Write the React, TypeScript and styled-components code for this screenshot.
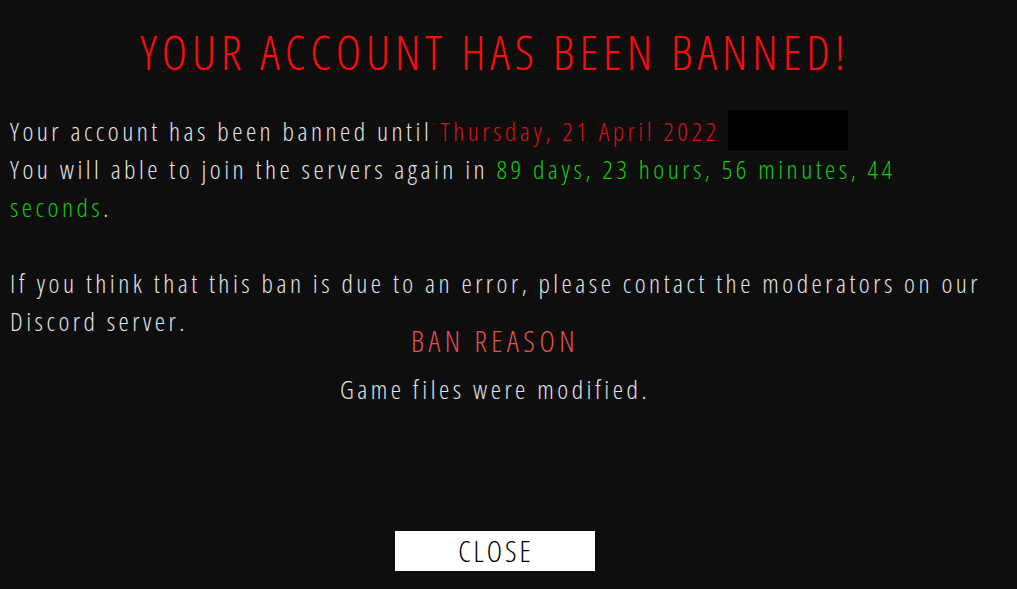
import styled, { createGlobalStyle } from "styled-components"

const GlobalStyle = createGlobalStyle`
  html, body {
    margin: 0;
    background: #0e0e0e;
  }
`

const Screen = styled.div`
  box-sizing: border-box;
  display: flex;
  flex-direction: column;
  align-items: center;
  min-height: 100vh;
  max-width: 980px;
  padding: 19px 0 18px 10px;
  font-family: "Open Sans", "Liberation Sans", sans-serif;
  font-stretch: 75%;
  font-weight: 300;
  color: #e4e4e4;
`

const Title = styled.h1`
  margin: 0;
  font-size: 48px;
  font-weight: 300;
  line-height: 65px;
  letter-spacing: 5px;
  color: #ff0a0a;
  text-align: center;
`

const Message = styled.p`
  align-self: stretch;
  margin: 26px -20px 0 0;
  font-size: 26px;
  line-height: 38px;
  letter-spacing: 3.48px;
`

const Highlight = styled.span<{ $tone: "red" | "green" }>`
  color: ${({ $tone }) => ($tone === "red" ? "#d81212" : "#12cc12")};
`

const Redacted = styled.span`
  display: inline-block;
  width: 120px;
  height: 40px;
  background: #000;
  vertical-align: bottom;
`

const ReasonBlock = styled.div`
  display: flex;
  flex-direction: column;
  align-items: center;
  margin-top: -19px;
`

const ReasonLabel = styled.div`
  font-size: 29px;
  line-height: 40px;
  letter-spacing: 4.5px;
  color: #e35252;
`

const ReasonText = styled.div`
  margin-top: 9px;
  font-size: 26px;
  line-height: 38px;
  letter-spacing: 3.5px;
`

const CloseButton = styled.button`
  margin-top: auto;
  width: 200px;
  height: 40px;
  border: none;
  border-radius: 0;
  background: #fff;
  color: #000;
  font-family: inherit;
  font-stretch: 75%;
  font-weight: 300;
  font-size: 29px;
  letter-spacing: 3px;
  padding: 0 0 0 2px;
  line-height: 40px;
  cursor: pointer;
`

export default function App() {
  return (
    <>
      <GlobalStyle />
      <Screen>
        <Title>YOUR ACCOUNT HAS BEEN BANNED!</Title>
        <Message>
          Your account has been banned until{" "}
          <Highlight $tone="red">Thursday, 21 April 2022</Highlight> <Redacted />
          <br />
          You will able to join the servers again in{" "}
          <Highlight $tone="green">89 days, 23 hours, 56 minutes, 44 seconds</Highlight>.
          <br />
          <br />
          If you think that this ban is due to an error, please contact the moderators on our
          Discord server.
        </Message>
        <ReasonBlock>
          <ReasonLabel>BAN REASON</ReasonLabel>
          <ReasonText>Game files were modified.</ReasonText>
        </ReasonBlock>
        <CloseButton>CLOSE</CloseButton>
      </Screen>
    </>
  )
}
